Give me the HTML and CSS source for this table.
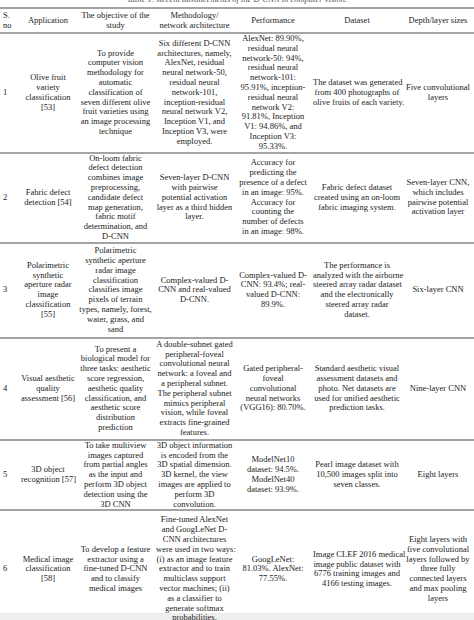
FILE: index.html
```html
<!DOCTYPE html>
<html lang="en">
<head>
<meta charset="utf-8">
<title>Table 1</title>
<link rel="stylesheet" href="styles.css">
</head>
<body>
<div class="caption"><span>Table 1: Recent advancements of the D-CNN in computer vision.</span></div>
<table class="grid">
  <colgroup>
    <col class="c-no"><col class="c-app"><col class="c-obj"><col class="c-meth"><col class="c-perf"><col class="c-data"><col class="c-depth">
  </colgroup>
  <thead>
    <tr class="rh">
      <th class="no">S.<br>no</th>
      <th>Application</th>
      <th>The objective of the<br>study</th>
      <th>Methodology/<br>network architecture</th>
      <th>Performance</th>
      <th>Dataset</th>
      <th>Depth/layer sizes</th>
    </tr>
  </thead>
  <tbody>
    <tr class="r1">
      <td class="no">1</td>
      <td>Olive fruit<br>variety<br>classification<br>[53]</td>
      <td>To provide<br>computer vision<br>methodology for<br>automatic<br>classification of<br>seven different olive<br>fruit varieties using<br>an image processing<br>technique</td>
      <td>Six different D-CNN<br>architectures, namely,<br>AlexNet, residual<br>neural network-50,<br>residual neural<br>network-101,<br>inception-residual<br>neural network V2,<br>Inception V1, and<br>Inception V3, were<br>employed.</td>
      <td>AlexNet: 89.90%,<br>residual neural<br>network-50: 94%,<br>residual neural<br>network-101:<br>95.91%, inception-<br>residual neural<br>network V2:<br>91.81%, Inception<br>V1: 94.86%, and<br>Inception V3:<br>95.33%.</td>
      <td>The dataset was generated<br>from 400 photographs of<br>olive fruits of each variety.</td>
      <td>Five convolutional<br>layers</td>
    </tr>
    <tr class="r2">
      <td class="no">2</td>
      <td>Fabric defect<br>detection [54]</td>
      <td>On-loom fabric<br>defect detection<br>combines image<br>preprocessing,<br>candidate defect<br>map generation,<br>fabric motif<br>determination, and<br>D-CNN</td>
      <td>Seven-layer D-CNN<br>with pairwise<br>potential activation<br>layer as a third hidden<br>layer.</td>
      <td>Accuracy for<br>predicting the<br>presence of a defect<br>in an image: 95%.<br>Accuracy for<br>counting the<br>number of defects<br>in an image: 98%.</td>
      <td>Fabric defect dataset<br>created using an on-loom<br>fabric imaging system.</td>
      <td>Seven-layer CNN,<br>which includes<br>pairwise potential<br>activation layer</td>
    </tr>
    <tr class="r3">
      <td class="no">3</td>
      <td>Polarimetric<br>synthetic<br>aperture radar<br>image<br>classification<br>[55]</td>
      <td>Polarimetric<br>synthetic aperture<br>radar image<br>classification<br>classifies image<br>pixels of terrain<br>types, namely, forest,<br>water, grass, and<br>sand</td>
      <td>Complex-valued D-<br>CNN and real-valued<br>D-CNN.</td>
      <td>Complex-valued D-<br>CNN: 93.4%; real-<br>valued D-CNN:<br>89.9%.</td>
      <td>The performance is<br>analyzed with the airborne<br>steered array radar dataset<br>and the electronically<br>steered array radar<br>dataset.</td>
      <td>Six-layer CNN</td>
    </tr>
    <tr class="r4">
      <td class="no">4</td>
      <td>Visual aesthetic<br>quality<br>assessment [56]</td>
      <td>To present a<br>biological model for<br>three tasks: aesthetic<br>score regression,<br>aesthetic quality<br>classification, and<br>aesthetic score<br>distribution<br>prediction</td>
      <td>A double-subnet gated<br>peripheral-foveal<br>convolutional neural<br>network: a foveal and<br>a peripheral subnet.<br>The peripheral subnet<br>mimics peripheral<br>vision, while foveal<br>extracts fine-grained<br>features.</td>
      <td>Gated peripheral-<br>foveal<br>convolutional<br>neural networks<br>(VGG16): 80.70%.</td>
      <td>Standard aesthetic visual<br>assessment datasets and<br>photo. Net datasets are<br>used for unified aesthetic<br>prediction tasks.</td>
      <td>Nine-layer CNN</td>
    </tr>
    <tr class="r5">
      <td class="no">5</td>
      <td>3D object<br>recognition [57]</td>
      <td>To take multiview<br>images captured<br>from partial angles<br>as the input and<br>perform 3D object<br>detection using the<br>3D CNN</td>
      <td>3D object information<br>is encoded from the<br>3D spatial dimension.<br>3D kernel, the view<br>images are applied to<br>perform 3D<br>convolution.</td>
      <td>ModelNet10<br>dataset: 94.5%.<br>ModelNet40<br>dataset: 93.9%.</td>
      <td>Pearl image dataset with<br>10,500 images split into<br>seven classes.</td>
      <td>Eight layers</td>
    </tr>
    <tr class="r6">
      <td class="no">6</td>
      <td>Medical image<br>classification<br>[58]</td>
      <td>To develop a feature<br>extractor using a<br>fine-tuned D-CNN<br>and to classify<br>medical images</td>
      <td>Fine-tuned AlexNet<br>and GoogLeNet D-<br>CNN architectures<br>were used in two ways:<br>(i) as an image feature<br>extractor and to train<br>multiclass support<br>vector machines; (ii)<br>as a classifier to<br>generate softmax<br>probabilities.</td>
      <td>GoogLeNet:<br>81.03%. AlexNet:<br>77.55%.</td>
      <td>Image CLEF 2016 medical<br>image public dataset with<br>6776 training images and<br>4166 testing images.</td>
      <td>Eight layers with<br>five convolutional<br>layers followed by<br>three fully<br>connected layers<br>and max pooling<br>layers</td>
    </tr>
  </tbody>
</table>
</body>
</html>
```
FILE: styles.css
```css
html, body {
  margin: 0;
  padding: 0;
}
body {
  width: 474px;
  height: 620px;
  overflow: hidden;
  background: linear-gradient(to bottom, #ffffff 613px, #eeeeee 613px);
  font-family: "Liberation Serif", "Times New Roman", serif;
  color: #222222;
}
.caption {
  height: 7px;
  overflow: hidden;
  text-align: center;
  font-size: 8.5px;
  color: #555555;
  font-style: italic;
}
.caption span {
  display: block;
  line-height: 10px;
  margin-top: -6px;
}
.grid {
  border-collapse: collapse;
  table-layout: fixed;
  width: 474px;
}
.c-no { width: 20px; }
.c-app { width: 56px; }
.c-obj { width: 79px; }
.c-meth { width: 79px; }
.c-perf { width: 78px; }
.c-data { width: 90px; }
.c-depth { width: 72px; }

.grid th,
.grid td {
  padding: 0 1px;
  text-align: center;
  vertical-align: middle;
  font-size: 8.5px;
  line-height: 9.8px;
  white-space: nowrap;
  font-weight: normal;
  border-bottom: 2px solid #a4a4a4;
}
.grid thead th {
  border-top: 2px solid #a4a4a4;
}
.grid .no {
  text-align: left;
  padding-left: 3px;
}
.rh th { height: 23px; }
.r1 td { height: 117px; }
.r2 td { height: 84px; }
.r3 td { height: 93px; }
.r4 td { height: 100px; }
.r5 td { height: 68px; }
.r6 td { height: 116px; }
```
